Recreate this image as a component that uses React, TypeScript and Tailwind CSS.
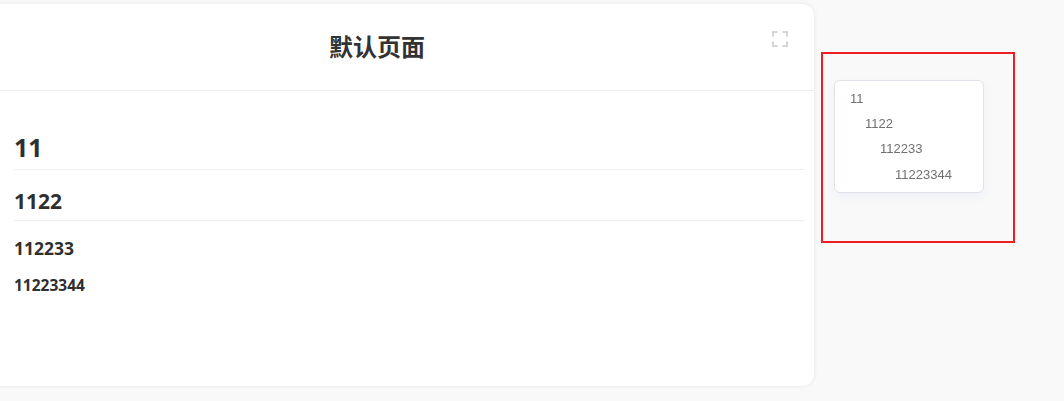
const TOC = [
  { text: '11', indent: 'pl-0' },
  { text: '1122', indent: 'pl-[15px]' },
  { text: '112233', indent: 'pl-[30px]' },
  { text: '11223344', indent: 'pl-[45px]' },
];

export default function App() {
  return (
    <div className="flex h-[401px] w-[1064px] overflow-hidden bg-[#f9f9f9] font-['Open_Sans','Noto_Sans_CJK_SC',sans-serif]">
      <div className="ml-[-60px] mt-1 flex h-[382px] w-[874px] shrink-0 flex-col rounded-r-xl bg-white shadow-[0_0_5px_rgba(0,0,0,0.08)]">
        <div className="relative flex h-[87px] shrink-0 items-center justify-center border-b border-[#eeeeee] pb-[1.5px]">
          <h1 className="font-['Noto_Sans_CJK_SC',sans-serif] text-2xl font-bold text-[#333333]">默认页面</h1>
          <div className="absolute right-[26px] top-[27px] h-4 w-4 text-[#d4d4d4]">
            <svg viewBox="0 0 16 16" className="h-4 w-4" fill="none" stroke="currentColor" strokeWidth="2">
              <path d="M1 5.500V1h4.500M10.500 1H15v4.500M15 10.500V15h-4.500M5.500 15H1v-4.500" />
            </svg>
          </div>
        </div>
        <div className="ml-[74px] mr-[10px] flex flex-col text-[#2f2f2f]">
          <h2 className="mt-[26px] flex h-[53px] items-center border-b border-[#eeeeee] pt-[10px] text-[25px] font-bold">11</h2>
          <h3 className="flex h-[51px] items-center border-b border-[#eeeeee] pt-[14px] text-[21px] font-bold">1122</h3>
          <h4 className="mt-[15px] text-[17.5px] font-bold leading-6">112233</h4>
          <h5 className="mt-[13px] text-[15.5px] font-bold leading-6">11223344</h5>
        </div>
      </div>
      <div className="ml-[7px] mt-[52px] h-[191px] w-[194px] shrink-0 border-2 border-[#ee1c25] pl-[11px] pt-[26px]">
        <div className="flex h-[113px] w-[150px] flex-col rounded-md border border-[#dfe2ea] bg-white pl-[15px] pt-[5px] text-[13px] text-[#707070] shadow-[0_4px_8px_rgba(220,225,245,0.35)] will-change-transform font-['Liberation_Sans',sans-serif]">
          {TOC.map((item) => (
            <div key={item.text} className={`h-[25.2px] leading-[25px] ${item.indent}`}>
              {item.text}
            </div>
          ))}
        </div>
      </div>
    </div>
  );
}
